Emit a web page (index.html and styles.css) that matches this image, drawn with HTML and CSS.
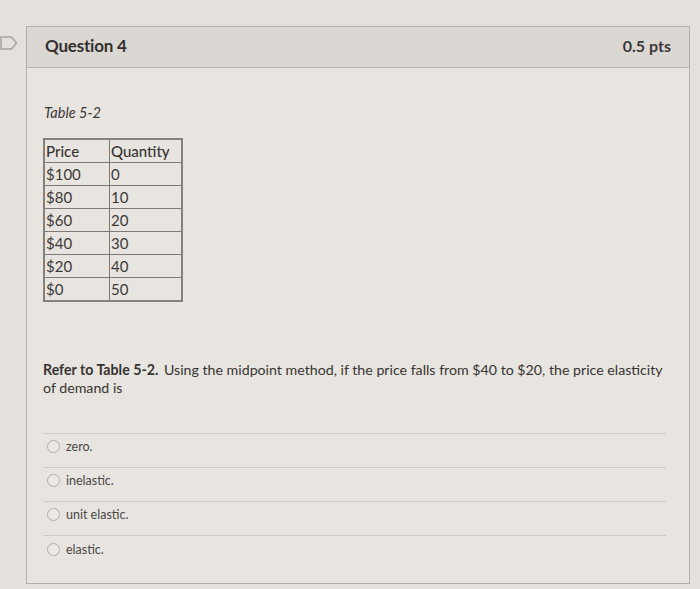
FILE: index.html
```html
<!DOCTYPE html>
<html>
<head>
<meta charset="utf-8">
<link rel="stylesheet" href="styles.css">
</head>
<body>
<div class="page">
  <div class="flagcol">
    <svg class="flag" width="18" height="14" viewBox="0 0 18 14">
      <path d="M1 1 H11.5 L16.5 7 L11.5 13 H1 Z" fill="none" stroke="#a6a29e" stroke-width="1.5" stroke-linejoin="miter"/>
    </svg>
  </div>
  <div class="card">
    <div class="card-head">
      <span class="qtitle">Question 4</span>
      <span class="pts">0.5 pts</span>
    </div>
    <div class="card-body">
      <p class="tcap">Table 5-2</p>
      <table class="data">
        <tr><td class="c1">Price</td><td class="c2">Quantity</td></tr>
        <tr><td>$100</td><td>0</td></tr>
        <tr><td>$80</td><td>10</td></tr>
        <tr><td>$60</td><td>20</td></tr>
        <tr><td>$40</td><td>30</td></tr>
        <tr><td>$20</td><td>40</td></tr>
        <tr><td>$0</td><td>50</td></tr>
      </table>
      <p class="qtext"><b>Refer to Table 5-2.</b> Using the midpoint method, if the price falls from $40 to $20, the price elasticity of demand is</p>
      <div class="answers">
        <div class="ans"><span class="radio"></span><span>zero.</span></div>
        <div class="ans"><span class="radio"></span><span>inelastic.</span></div>
        <div class="ans"><span class="radio"></span><span>unit elastic.</span></div>
        <div class="ans"><span class="radio"></span><span>elastic.</span></div>
      </div>
    </div>
  </div>
</div>
</body>
</html>
```

FILE: styles.css
```css
html, body {
  margin: 0;
  padding: 0;
}
body {
  background: #e4e0db;
  font-family: Lato, "Noto Sans", sans-serif;
  color: #3a3836;
  width: 700px;
  height: 589px;
  overflow: hidden;
}
.page {
  display: flex;
  padding-top: 26px;
}
.flagcol {
  width: 26px;
  flex: none;
  padding-top: 10px;
}
.flag {
  display: block;
}
.card {
  width: 662px;
  border: 1px solid #b4b0ab;
  background: #e8e4df;
  height: 556px;
}
.card-head {
  background: #dbd7d2;
  border-bottom: 1px solid #b9b5b0;
  display: flex;
  justify-content: space-between;
  align-items: center;
  padding: 0 18px 3px 18px;
  box-sizing: border-box;
  height: 41px;
}
.qtitle {
  font-size: 17px;
  font-weight: 700;
  color: #33312f;
  letter-spacing: -0.2px;
}
.pts {
  font-size: 16px;
  font-weight: 700;
  color: #3b3937;
}
.card-body {
  padding: 36px 23px 0 16px;
}
.tcap {
  margin: 0 0 0 1px;
  font-size: 14.5px;
  font-style: italic;
  color: #3a3836;
  line-height: 18px;
}
.data {
  margin-top: 16px;
  border-collapse: collapse;
  border: 2px solid #84807c;
  font-size: 15px;
  color: #3c3a38;
}
.data td {
  border: 1px solid #7d7976;
  height: 22px;
  padding: 0 1px;
  line-height: 22px;
  vertical-align: middle;
}
.data .c1, .data .c2 { font-weight: 500; color: #363432; }
.data td:first-child { width: 62px; }
.data .c2 { width: 69px; }
.qtext {
  margin: 59px 0 0 0;
  font-size: 14.2px;
  line-height: 18px;
  color: #363432;
}
.qtext b {
  font-weight: 700;
  margin-right: 2px;
}
.answers {
  margin-top: 36px;
  border-top: 1px solid #cfcbc6;
}
.ans {
  display: flex;
  align-items: center;
  gap: 6px;
  border-bottom: 1px solid #cfcbc6;
  font-size: 12.5px;
  color: #4a4846;
  padding-left: 4px;
  padding-bottom: 8px;
  box-sizing: border-box;
  height: 34px;
}
.ans:last-child {
  border-bottom: none;
}
.radio {
  width: 11px;
  height: 11px;
  border: 1px solid #b0aca8;
  border-radius: 50%;
  background: #ece8e3;
  flex: none;
}
```
